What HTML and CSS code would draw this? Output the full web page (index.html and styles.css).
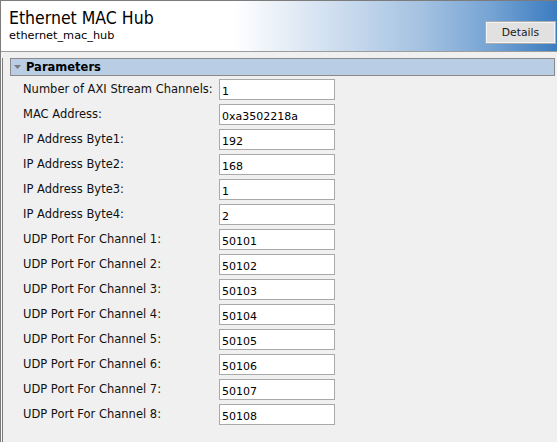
FILE: index.html
```html
<!DOCTYPE html>
<html>
<head>
<meta charset="utf-8">
<link rel="stylesheet" href="styles.css">
</head>
<body>
<div class="frame">
  <div class="header">
    <div class="titles">
      <div class="title">Ethernet MAC Hub</div>
      <div class="subtitle">ethernet_mac_hub</div>
    </div>
    <button class="details">Details</button>
  </div>
  <div class="content">
    <div class="inner">
      <div class="panel-head">
        <svg class="tri" width="7" height="4" viewBox="0 0 7 4"><polygon points="0,0 7,0 3.5,4" fill="#7a7a7a"/></svg>
        <span class="panel-title">Parameters</span>
      </div>
      <div class="rows">
        <div class="label">Number of AXI Stream Channels:</div><input class="field" value="1" readonly>
        <div class="label">MAC Address:</div><input class="field" value="0xa3502218a" readonly>
        <div class="label">IP Address Byte1:</div><input class="field" value="192" readonly>
        <div class="label">IP Address Byte2:</div><input class="field" value="168" readonly>
        <div class="label">IP Address Byte3:</div><input class="field" value="1" readonly>
        <div class="label">IP Address Byte4:</div><input class="field" value="2" readonly>
        <div class="label">UDP Port For Channel 1:</div><input class="field" value="50101" readonly>
        <div class="label">UDP Port For Channel 2:</div><input class="field" value="50102" readonly>
        <div class="label">UDP Port For Channel 3:</div><input class="field" value="50103" readonly>
        <div class="label">UDP Port For Channel 4:</div><input class="field" value="50104" readonly>
        <div class="label">UDP Port For Channel 5:</div><input class="field" value="50105" readonly>
        <div class="label">UDP Port For Channel 6:</div><input class="field" value="50106" readonly>
        <div class="label">UDP Port For Channel 7:</div><input class="field" value="50107" readonly>
        <div class="label">UDP Port For Channel 8:</div><input class="field" value="50108" readonly>
      </div>
    </div>
  </div>
</div>
</body>
</html>
```
FILE: styles.css
```css
html, body {
  margin: 0;
  padding: 0;
}
body {
  width: 557px;
  height: 442px;
  overflow: hidden;
  background: #f0f0f0;
  font-family: "DejaVu Sans", Verdana, sans-serif;
  color: #111;
}
.frame {
  box-sizing: border-box;
  width: 557px;
  height: 442px;
  border-top: 1px solid #7c7c7c;
  border-left: 1px solid #7c7c7c;
  display: flex;
  flex-direction: column;
  background: #f0f0f0;
}
.header {
  height: 50px;
  flex: none;
  border-bottom: 1px solid #9c9c9c;
  display: flex;
  justify-content: space-between;
  align-items: flex-start;
  background: linear-gradient(to right, #ffffff 0%, #ffffff 42%, #e4ecf6 52%, #c4d7ec 64%, #a3c1e1 76%, #76a4d4 88%, #3b7cc0 100%);
}
.titles {
  padding: 7px 0 0 8px;
}
.title {
  font-family: "DejaVu Sans Condensed", "DejaVu Sans", sans-serif;
  font-stretch: condensed;
  font-size: 17.5px;
  line-height: 21px;
  color: #000;
}
.subtitle {
  font-size: 11.3px;
  line-height: 14px;
  color: #000;
}
.details {
  margin: 20px 1px 0 0;
  width: 71px;
  height: 23px;
  box-sizing: border-box;
  background: #e1e1e1;
  border: 1px solid #adadad;
  box-shadow: inset 0 0 0 1px #f4f4f4;
  font-family: "DejaVu Sans", sans-serif;
  font-size: 10.8px;
  color: #1a1a1a;
  padding: 0;
}
.content {
  flex: 1;
  border-left: 1px solid #f6f6f6;
}
.inner {
  height: 100%;
  border-left: 1px solid #7c7c7c;
}
.panel-head {
  margin: 6px 2px 0 7px;
  height: 18px;
  box-sizing: border-box;
  border: 1px solid #8a8a8a;
  background: #b9cee5;
  display: flex;
  align-items: center;
  gap: 5px;
  padding: 1px 0 0 3px;
}
.tri {
  display: block;
  margin-top: -2px;
}
.panel-title {
  font-weight: bold;
  font-size: 11.5px;
  line-height: 15px;
  color: #000;
}
.rows {
  display: grid;
  grid-template-columns: 196px 116px;
  row-gap: 4px;
  padding: 3px 0 0 20px;
}
.label {
  font-size: 11.5px;
  line-height: 14px;
  padding-top: 3px;
  color: #111;
}
.field {
  box-sizing: border-box;
  width: 116px;
  height: 21px;
  margin: 0;
  border: 1px solid #a9a9a9;
  background: #fff;
  padding: 4px 2px 0 2px;
  font-family: "DejaVu Sans", sans-serif;
  font-size: 11px;
  color: #000;
  outline: none;
}
```
